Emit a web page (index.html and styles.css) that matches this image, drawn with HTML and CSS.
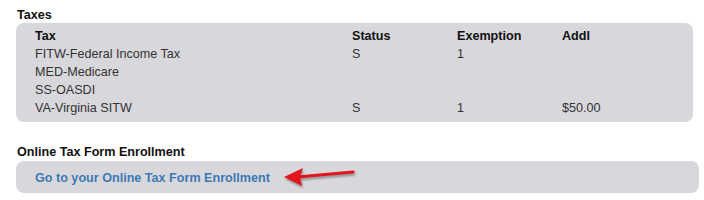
FILE: index.html
```
<!DOCTYPE html>
<html>
    <head>
        <meta charset="UTF-8">
        <title>Taxes</title>
        <link rel="stylesheet" href="styles.css">
    </head>
    <body>
        <div class="page">
            <div class="sectionTitle">Taxes</div>
            <div class="panel taxPanel">
                <div class="taxRow head">
                    <div>Tax</div>
                    <div>Status</div>
                    <div>Exemption</div>
                    <div>Addl</div>
                </div>
                <div class="taxRow">
                    <div>FITW-Federal Income Tax</div>
                    <div>S</div>
                    <div>1</div>
                    <div></div>
                </div>
                <div class="taxRow">
                    <div>MED-Medicare</div>
                    <div></div>
                    <div></div>
                    <div></div>
                </div>
                <div class="taxRow">
                    <div>SS-OASDI</div>
                    <div></div>
                    <div></div>
                    <div></div>
                </div>
                <div class="taxRow">
                    <div>VA-Virginia SITW</div>
                    <div>S</div>
                    <div>1</div>
                    <div>$50.00</div>
                </div>
            </div>

            <div class="sectionTitle second">Online Tax Form Enrollment</div>
            <div class="panel linkPanel">
                <a href="#" class="enrollLink">Go to your Online Tax Form Enrollment</a>
                <svg class="arrow" width="75" height="24" viewBox="0 0 75 24">
                    <line x1="15" y1="12" x2="71" y2="7" stroke="#e3141c" stroke-width="3.2" stroke-linecap="round"/>
                    <polygon points="2,12 21,3 18,12 20,21" fill="#e3141c"/>
                </svg>
            </div>
        </div>
    </body>
</html>
```

FILE: styles.css
```
html, body {
    margin: 0px;
    padding: 0px;
    background-color: #fff;
}

.page {
    padding: 7px 0px 0px 16px;
    font-family: Arial, "Liberation Sans", Helvetica, sans-serif;
    font-size: 12.6px;
    color: #333;
}

.sectionTitle {
    font-weight: bold;
    color: #111;
    line-height: 16px;
    padding-left: 1px;
}

.sectionTitle.second {
    margin-top: 22px;
}

.panel {
    background-color: #d8d8dc;
    border-radius: 8px;
    box-sizing: border-box;
}

.taxPanel {
    width: 677px;
    padding: 4px 0px 5px 19px;
}

.taxRow {
    display: grid;
    grid-template-columns: 317px 105px 105px 1fr;
    line-height: 18px;
    height: 18px;
}

.taxRow.head {
    font-weight: bold;
    color: #111;
}

.linkPanel {
    width: 683px;
    height: 32px;
    margin-top: 1px;
    padding: 0px 0px 0px 19px;
    display: flex;
    align-items: center;
}

.enrollLink {
    font-weight: bold;
    color: #3d78b4;
    text-decoration: none;
    line-height: 18px;
    padding-top: 1px;
}

.arrow {
    margin-left: 12px;
    filter: drop-shadow(1px 2px 1px rgba(0, 0, 0, 0.35));
}
```
